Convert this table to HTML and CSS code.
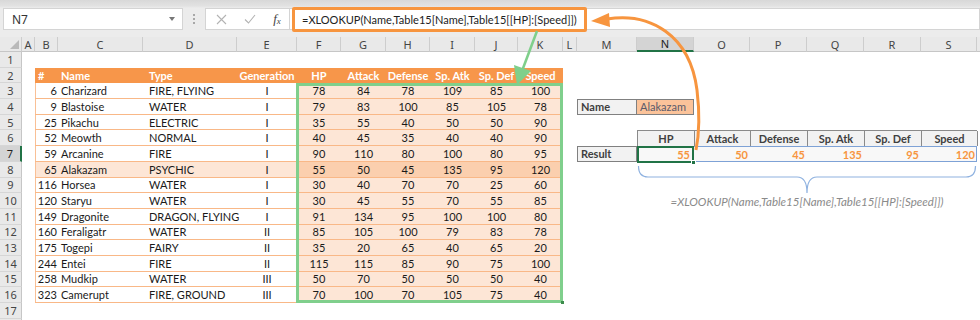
FILE: index.html
```html
<!DOCTYPE html>
<html>
<head>
<meta charset="utf-8">
<link rel="stylesheet" href="styles.css">
</head>
<body>
<div class="app">
  <div class="toolbar">
    <div class="namebox"><span>N7</span><span class="dd"></span></div>
    <div class="grip"><i></i><i></i><i></i></div>
    <div class="fnbox">
      <span class="fi"><svg width="11" height="11" viewBox="0 0 11 11"><path d="M1 1L10 10M10 1L1 10" stroke="#b3b3b3" stroke-width="1.1" fill="none"/></svg></span>
      <span class="fi"><svg width="12" height="10" viewBox="0 0 12 10"><path d="M1 5.5L4.5 9L11 1" stroke="#b3b3b3" stroke-width="1.1" fill="none"/></svg></span>
      <span class="fi fx"><i>f</i><small>x</small></span>
    </div>
    <div class="formula">
      <div class="fhl">=XLOOKUP(Name,Table15[Name],Table15[[HP]:[Speed]])</div>
    </div>
  </div>

  <div class="sheet">
    <div class="ch corner"><span class="tri"></span></div>
    <div class="ch">A</div><div class="ch">B</div><div class="ch">C</div><div class="ch">D</div><div class="ch">E</div>
    <div class="ch">F</div><div class="ch">G</div><div class="ch">H</div><div class="ch">I</div><div class="ch">J</div>
    <div class="ch">K</div><div class="ch">L</div><div class="ch">M</div><div class="ch sel">N</div><div class="ch">O</div>
    <div class="ch">P</div><div class="ch">Q</div><div class="ch">R</div><div class="ch">S</div><div class="ch last"></div>

    <div class="rhcol">
      <div class="rh">1</div><div class="rh">2</div><div class="rh">3</div><div class="rh">4</div><div class="rh">5</div>
      <div class="rh">6</div><div class="rh sel">7</div><div class="rh">8</div><div class="rh">9</div><div class="rh">10</div>
      <div class="rh">11</div><div class="rh">12</div><div class="rh">13</div><div class="rh">14</div><div class="rh">15</div>
      <div class="rh">16</div><div class="rh">17</div><div class="rh"></div>
    </div>

    <div class="tbl">
      <div class="trow hd"><div class="c l">#</div><div class="c l">Name</div><div class="c l t">Type</div><div class="c m">Generation</div><div class="c m">HP</div><div class="c m">Attack</div><div class="c m">Defense</div><div class="c m">Sp. Atk</div><div class="c m">Sp. Def</div><div class="c m">Speed</div></div>
      <div class="trow"><div class="c r">6</div><div class="c l">Charizard</div><div class="c l t">FIRE, FLYING</div><div class="c m">I</div><div class="c m s">78</div><div class="c m s">84</div><div class="c m s">78</div><div class="c m s">109</div><div class="c m s">85</div><div class="c m s">100</div></div>
      <div class="trow"><div class="c r">9</div><div class="c l">Blastoise</div><div class="c l t">WATER</div><div class="c m">I</div><div class="c m s">79</div><div class="c m s">83</div><div class="c m s">100</div><div class="c m s">85</div><div class="c m s">105</div><div class="c m s">78</div></div>
      <div class="trow"><div class="c r">25</div><div class="c l">Pikachu</div><div class="c l t">ELECTRIC</div><div class="c m">I</div><div class="c m s">35</div><div class="c m s">55</div><div class="c m s">40</div><div class="c m s">50</div><div class="c m s">50</div><div class="c m s">90</div></div>
      <div class="trow"><div class="c r">52</div><div class="c l">Meowth</div><div class="c l t">NORMAL</div><div class="c m">I</div><div class="c m s">40</div><div class="c m s">45</div><div class="c m s">35</div><div class="c m s">40</div><div class="c m s">40</div><div class="c m s">90</div></div>
      <div class="trow"><div class="c r">59</div><div class="c l">Arcanine</div><div class="c l t">FIRE</div><div class="c m">I</div><div class="c m s">90</div><div class="c m s">110</div><div class="c m s">80</div><div class="c m s">100</div><div class="c m s">80</div><div class="c m s">95</div></div>
      <div class="trow hl"><div class="c r">65</div><div class="c l">Alakazam</div><div class="c l t">PSYCHIC</div><div class="c m">I</div><div class="c m s">55</div><div class="c m s">50</div><div class="c m s">45</div><div class="c m s">135</div><div class="c m s">95</div><div class="c m s">120</div></div>
      <div class="trow"><div class="c r">116</div><div class="c l">Horsea</div><div class="c l t">WATER</div><div class="c m">I</div><div class="c m s">30</div><div class="c m s">40</div><div class="c m s">70</div><div class="c m s">70</div><div class="c m s">25</div><div class="c m s">60</div></div>
      <div class="trow"><div class="c r">120</div><div class="c l">Staryu</div><div class="c l t">WATER</div><div class="c m">I</div><div class="c m s">30</div><div class="c m s">45</div><div class="c m s">55</div><div class="c m s">70</div><div class="c m s">55</div><div class="c m s">85</div></div>
      <div class="trow"><div class="c r">149</div><div class="c l">Dragonite</div><div class="c l t">DRAGON, FLYING</div><div class="c m">I</div><div class="c m s">91</div><div class="c m s">134</div><div class="c m s">95</div><div class="c m s">100</div><div class="c m s">100</div><div class="c m s">80</div></div>
      <div class="trow"><div class="c r">160</div><div class="c l">Feraligatr</div><div class="c l t">WATER</div><div class="c m">II</div><div class="c m s">85</div><div class="c m s">105</div><div class="c m s">100</div><div class="c m s">79</div><div class="c m s">83</div><div class="c m s">78</div></div>
      <div class="trow"><div class="c r">175</div><div class="c l">Togepi</div><div class="c l t">FAIRY</div><div class="c m">II</div><div class="c m s">35</div><div class="c m s">20</div><div class="c m s">65</div><div class="c m s">40</div><div class="c m s">65</div><div class="c m s">20</div></div>
      <div class="trow"><div class="c r">244</div><div class="c l">Entei</div><div class="c l t">FIRE</div><div class="c m">II</div><div class="c m s">115</div><div class="c m s">115</div><div class="c m s">85</div><div class="c m s">90</div><div class="c m s">75</div><div class="c m s">100</div></div>
      <div class="trow"><div class="c r">258</div><div class="c l">Mudkip</div><div class="c l t">WATER</div><div class="c m">III</div><div class="c m s">50</div><div class="c m s">70</div><div class="c m s">50</div><div class="c m s">50</div><div class="c m s">50</div><div class="c m s">40</div></div>
      <div class="trow"><div class="c r">323</div><div class="c l">Camerupt</div><div class="c l t">FIRE, GROUND</div><div class="c m">III</div><div class="c m s">70</div><div class="c m s">100</div><div class="c m s">70</div><div class="c m s">105</div><div class="c m s">75</div><div class="c m s">40</div></div>
    </div>
    <div class="gbox"></div>

    <div class="lbl namelbl">Name</div>
    <div class="nameval">Alakazam</div>

    <div class="rhdr">
      <div>HP</div><div>Attack</div><div>Defense</div><div>Sp. Atk</div><div>Sp. Def</div><div>Speed</div>
    </div>
    <div class="lbl reslbl">Result</div>
    <div class="rvals">
      <div class="active">55</div><div>50</div><div>45</div><div>135</div><div>95</div><div>120</div>
    </div>

    <div class="brace">
      <svg width="340" height="32" viewBox="0 0 340 32"><path d="M1.5 4 Q1.5 15 11 15 L160 15 Q170 15 170 31 Q170 15 180 15 L329 15 Q338.5 15 338.5 4" fill="none" stroke="#8fb2e0" stroke-width="1.2"/></svg>
    </div>
    <div class="note">=XLOOKUP(Name,Table15[Name],Table15[[HP]:[Speed]])</div>
  </div>

  <svg class="arrows" width="980" height="320" viewBox="0 0 980 320">
    <path d="M607 19 C650 12 690 35 697 90 C700 115 699 135 696 150" fill="none" stroke="#f7953f" stroke-width="3"/>
    <polygon points="591,21 609,13 610,27" fill="#f7953f"/>
    <path d="M537 31 L522 71" fill="none" stroke="#7fcf8b" stroke-width="2.5"/>
    <polygon points="517,85 514,65 531,71" fill="#7fcf8b"/>
  </svg>
</div>
</body>
</html>
```

FILE: styles.css
```css
body {
  margin: 0;
  background: #fff;
  font-family: Lato, "Noto Sans", sans-serif;
}

.app {
  position: relative;
  width: 980px;
  height: 320px;
  overflow: hidden;
}

/* ---------- toolbar ---------- */
.toolbar {
  height: 37px;
  box-sizing: border-box;
  padding: 8px 0 0 3px;
  display: flex;
  align-items: flex-start;
  background: linear-gradient(#d8d8d8 0, #e2e2e2 6px, #ececec 8px);
}

.namebox {
  width: 180px;
  height: 22px;
  box-sizing: border-box;
  background: #fff;
  border: 1px solid #d4d4d4;
  display: flex;
  align-items: center;
  justify-content: space-between;
  padding: 0 7px 0 8px;
  font: 12px "Noto Sans", sans-serif;
  color: #333;
}

.dd {
  width: 0;
  height: 0;
  border-left: 3.5px solid transparent;
  border-right: 3.5px solid transparent;
  border-top: 4px solid #777;
}

.grip {
  width: 22px;
  height: 22px;
  display: flex;
  flex-direction: column;
  align-items: center;
  justify-content: center;
  gap: 2px;
}

.grip i {
  width: 2px;
  height: 2px;
  background: #a8a8a8;
}

.fnbox {
  width: 85px;
  height: 22px;
  box-sizing: border-box;
  background: #fff;
  border: 1px solid #d4d4d4;
  display: grid;
  grid-template-columns: 30px 27px 28px;
  align-items: center;
  justify-items: center;
}

.fi {
  display: flex;
  align-items: center;
}

.fx {
  font-family: "Liberation Serif", serif;
  color: #444;
  font-size: 13px;
}

.fx small {
  font-style: italic;
  font-size: 9px;
  margin-top: 4px;
}

.formula {
  flex: 1;
  height: 22px;
  box-sizing: border-box;
  background: #fff;
  border: 1px solid #d4d4d4;
  border-left: none;
  padding-left: 2px;
}

.fhl {
  width: 295px;
  height: 25px;
  margin-top: -2px;
  box-sizing: border-box;
  border: 3px solid #f7953f;
  border-radius: 2px;
  padding-left: 7px;
  display: flex;
  align-items: center;
  font-size: 11px;
  color: #222;
  white-space: nowrap;
  background: #fff;
}

/* ---------- sheet ---------- */
.sheet {
  display: grid;
  grid-template-columns: 22px 13px 23px 85px 94px 60px 44px 45px 44px 45px 43px 45px 14px 60px 57px 56px 57px 57px 57px 56px 1fr;
  grid-template-rows: 15px repeat(18, 15.7px);
}

.ch {
  grid-row: 1;
  box-sizing: border-box;
  background: #e9e9e9;
  border-right: 1px solid #cdcdcd;
  border-bottom: 1px solid #c6c6c6;
  display: flex;
  align-items: center;
  justify-content: center;
  font: 11px "Noto Sans", sans-serif;
  color: #444;
}

.ch.sel {
  background: #d4d4d4;
  border-bottom: 2px solid #217346;
  color: #222;
}

.ch.last {
  border-right: none;
}

.corner {
  position: relative;
}

.tri {
  position: absolute;
  right: 2px;
  bottom: 2px;
  width: 0;
  height: 0;
  border-left: 9px solid transparent;
  border-bottom: 9px solid #b9b9b9;
}

.rhcol {
  grid-column: 1;
  grid-row: 2 / 20;
  display: flex;
  flex-direction: column;
}

.rh {
  height: 15.7px;
  flex: none;
  box-sizing: border-box;
  background: #e9e9e9;
  border-bottom: 1px solid #d6d6d6;
  border-right: 1px solid #c6c6c6;
  display: flex;
  align-items: center;
  justify-content: center;
  font: 11px "Noto Sans", sans-serif;
  color: #444;
}

.rh.sel {
  background: #d4d4d4;
  border-right: 2px solid #217346;
  color: #222;
}

/* ---------- data table ---------- */
.tbl {
  grid-column: 3 / 13;
  grid-row: 3 / 18;
  display: flex;
  flex-direction: column;
}

.trow {
  display: grid;
  grid-template-columns: 23px 85px 94px 60px 44px 45px 44px 45px 43px 45px;
  height: 15.7px;
  flex: none;
  box-sizing: border-box;
  border-bottom: 1px solid #f9b887;
  box-shadow: inset 1px 0 #f9c096;
  font-size: 11px;
  color: #1a1a1a;
  background: #fff;
}

.trow.hd {
  background: #f7964a;
  color: #fff;
  font-weight: bold;
  border-bottom: none;
  box-shadow: none;
}

.trow.hl {
  background: #fde6d6;
}

.c {
  display: flex;
  align-items: center;
  white-space: nowrap;
  overflow: visible;
}

.c.l {
  padding-left: 3px;
}

.c.t {
  padding-left: 6px;
}

.c.r {
  justify-content: flex-end;
  padding-right: 1px;
}

.c.m {
  justify-content: center;
}

.c.s {
  background: #fde6d6;
}

.trow.hl .c.s {
  background: #fbcfae;
}

.gbox {
  grid-column: 7 / 13;
  grid-row: 4 / 18;
  border: 3px solid #80cf8c;
  margin-left: -1px;
  position: relative;
  z-index: 2;
}

.gbox::after {
  content: "";
  position: absolute;
  right: -4px;
  bottom: -4px;
  width: 3px;
  height: 3px;
  background: #3c8c4c;
}

/* ---------- lookup block ---------- */
.lbl {
  box-sizing: border-box;
  background: #f2f2f2;
  border: 1px solid #808080;
  display: flex;
  align-items: center;
  padding-left: 3px;
  font-size: 11px;
  font-weight: bold;
  color: #3f3f3f;
}

.namelbl {
  grid-column: 14;
  grid-row: 5;
}

.nameval {
  grid-column: 15;
  grid-row: 5;
  box-sizing: border-box;
  background: #fbc39a;
  border: 1px solid #808080;
  border-left: none;
  display: flex;
  align-items: center;
  padding-left: 3px;
  font-size: 11px;
  color: #5a5a6a;
}

.reslbl {
  grid-column: 14;
  grid-row: 8;
}

.rhdr,
.rvals {
  grid-column: 15 / 21;
  display: grid;
  grid-template-columns: 57px 56px 57px 57px 57px 56px;
  font-size: 11px;
  font-weight: bold;
}

.rhdr {
  grid-row: 7;
  box-sizing: border-box;
  border-top: 1px solid #8a8a8a;
  border-left: 1px solid #8a8a8a;
}

.rhdr div {
  box-sizing: border-box;
  background: #f2f2f2;
  border-right: 1px solid #8a8a8a;
  display: flex;
  align-items: center;
  justify-content: center;
  color: #3f3f3f;
}

.rvals {
  grid-row: 8;
  box-sizing: border-box;
  border: 1px solid #7ea2d6;
  border-left: none;
  background: #f8f8f8;
}

.rvals div {
  display: flex;
  align-items: center;
  justify-content: flex-end;
  padding-right: 2px;
  color: #f7953f;
}

.rvals div.active {
  position: relative;
  box-sizing: border-box;
  border: 2px solid #217346;
  margin-top: -1px;
  margin-bottom: -1px;
}

.rvals div.active::after {
  content: "";
  position: absolute;
  right: -4px;
  bottom: -4px;
  width: 5px;
  height: 5px;
  background: #217346;
  border: 1px solid #fff;
  box-sizing: border-box;
}

.brace {
  grid-column: 15 / 21;
  grid-row: 9 / 11;
}

.brace svg {
  display: block;
}

.note {
  grid-column: 15 / 21;
  grid-row: 11;
  display: flex;
  align-items: center;
  justify-content: center;
  font-size: 11.5px;
  font-style: italic;
  color: #8a8a8a;
  white-space: nowrap;
}

.arrows {
  position: absolute;
  left: 0;
  top: 0;
  z-index: 5;
  pointer-events: none;
}
```
